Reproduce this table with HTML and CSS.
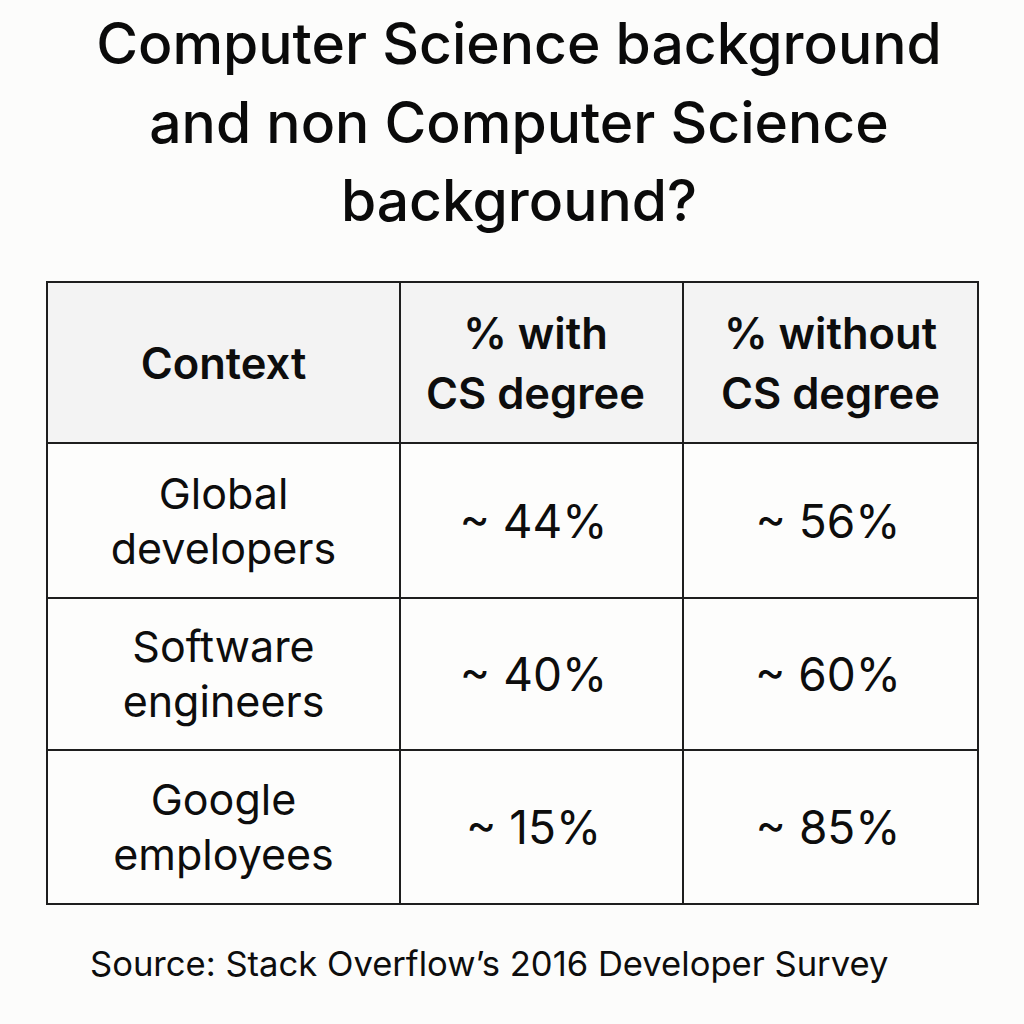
FILE: index.html
```html
<!DOCTYPE html>
<html>
<head>
<meta charset="utf-8">
<link rel="stylesheet" href="styles.css">
</head>
<body>
<div class="page">
  <h1 class="title">Computer Science background<br>and non Computer Science<br>background?</h1>
  <table class="grid">
    <colgroup>
      <col class="c1"><col class="c2"><col class="c3">
    </colgroup>
    <thead>
      <tr class="head">
        <th>Context</th>
        <th class="h2">% with<br>CS degree</th>
        <th>% without<br>CS degree</th>
      </tr>
    </thead>
    <tbody>
      <tr class="r1">
        <td class="ctx">Global<br>developers</td>
        <td class="num n2">~ 44%</td>
        <td class="num n3">~ 56%</td>
      </tr>
      <tr class="r2">
        <td class="ctx">Software<br>engineers</td>
        <td class="num n2">~ 40%</td>
        <td class="num n3">~ 60%</td>
      </tr>
      <tr class="r3">
        <td class="ctx">Google<br>employees</td>
        <td class="num n2">~ 15%</td>
        <td class="num n3">~ 85%</td>
      </tr>
    </tbody>
  </table>
  <p class="source">Source: Stack Overflow’s 2016 Developer Survey</p>
</div>
</body>
</html>
```
FILE: styles.css
```css
html, body {
  margin: 0;
  padding: 0;
  background: #fcfcfb;
}
body {
  width: 1024px;
  height: 1024px;
  overflow: hidden;
  font-family: Inter, "Liberation Sans", Arial, sans-serif;
  color: #0d0d0d;
}
.page {
  padding-top: 5px;
}
.title {
  margin: 0;
  text-align: center;
  font-size: 57px;
  font-weight: 500;
  line-height: 78.5px;
  color: #0a0a0a;
  padding-left: 14px;
}
.grid {
  margin: 40.5px 0 0 46px;
  border-collapse: collapse;
  width: 931px;
  table-layout: fixed;
}
.c1 { width: 353px; }
.c2 { width: 283px; }
.c3 { width: 295px; }
.grid th, .grid td {
  border: 2px solid #1e1e1e;
  text-align: center;
  vertical-align: middle;
  padding: 0;
}
.head th {
  background: #f3f3f3;
  height: 159px;
  font-size: 43.5px;
  font-weight: 600;
  line-height: 60px;
  color: #0d0d0d;
}
.head th.h2 {
  padding-right: 12px;
}
.grid td {
  background: #fdfdfc;
}
.r1 td { height: 153px; }
.r2 td { height: 150px; }
.r3 td { height: 152px; }
.ctx {
  font-size: 43px;
  line-height: 55px;
  padding-right: 6px;
}
.num {
  font-size: 46px;
}
.grid td.n2 { padding-right: 16px; }
.grid td.n3 { padding-right: 5px; }
.source {
  margin: 37px 0 0 90px;
  font-size: 34.6px;
  color: #0d0d0d;
}
```
